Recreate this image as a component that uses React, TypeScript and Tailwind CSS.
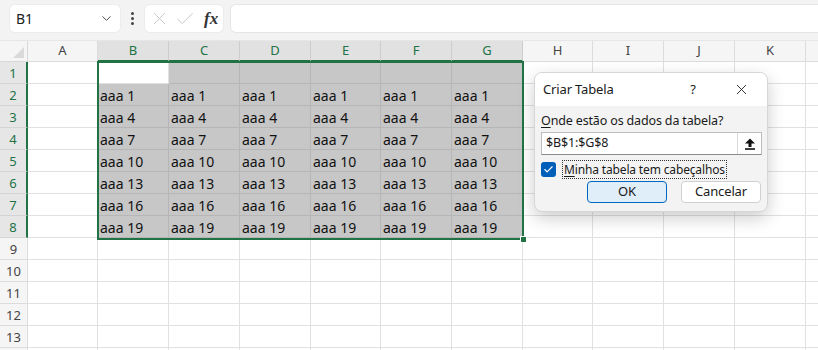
import { Check, ChevronDown, X } from 'lucide-react'

const columns = [
  { name: 'A', width: 70 },
  { name: 'B', width: 71 },
  { name: 'C', width: 71 },
  { name: 'D', width: 71 },
  { name: 'E', width: 70 },
  { name: 'F', width: 71 },
  { name: 'G', width: 71 },
  { name: 'H', width: 70 },
  { name: 'I', width: 71 },
  { name: 'J', width: 71 },
  { name: 'K', width: 71 },
  { name: '', width: 71 },
]

const rows = Array.from({ length: 14 }, (_, i) => i + 1)
const selectedCols = ['B', 'C', 'D', 'E', 'F', 'G']

function cellValue(row: number) {
  if (row < 2 || row > 8) return ''
  return `aaa ${(row - 2) * 3 + 1}`
}

function UploadArrow() {
  return (
    <svg width="14" height="14" viewBox="0 0 14 14" fill="#111">
      <polygon points="7,1.5 2,6.5 5.5,6.5 5.5,10 8.5,10 8.5,6.5 12,6.5" />
      <rect x="2" y="11.2" width="10" height="1.6" />
    </svg>
  )
}

function Toolbar() {
  return (
    <div className="h-[41px] bg-[#f3f3f3] flex items-start pt-[5px] border-b border-[#e6e6e6]">
      <div className="ml-[10px] w-[110px] h-[27px] bg-white rounded-[5px] shadow-[0_0_0_1px_#ececec] flex items-center justify-between pl-[6px] pr-[6px]">
        <span className="text-[14px] text-[#222]">B1</span>
        <ChevronDown size={15} strokeWidth={1.5} className="text-[#444]" />
      </div>
      <div className="w-[25px] h-[27px] flex flex-col items-center justify-center gap-[2px]">
        <span className="w-[3px] h-[3px] rounded-full bg-[#444]" />
        <span className="w-[3px] h-[3px] rounded-full bg-[#444]" />
        <span className="w-[3px] h-[3px] rounded-full bg-[#444]" />
      </div>
      <div className="w-[78px] h-[27px] bg-white rounded-[5px] shadow-[0_0_0_1px_#ececec] flex items-center pl-[4px]">
        <X size={21} strokeWidth={1} className="text-[#c4c4c4]" />
        <Check size={22} strokeWidth={1} className="text-[#c4c4c4] ml-[4px]" />
        <span className="ml-[8px] font-['Liberation_Serif',serif] italic font-bold text-[17px] leading-none text-[#333]">
          fx
        </span>
      </div>
      <div className="ml-[8px] flex-1 h-[27px] bg-white rounded-l-[5px] shadow-[0_0_0_1px_#e6e6e6]" />
    </div>
  )
}

function HeaderRow() {
  return (
    <div className="flex h-[21px]">
      <div className="w-[28px] shrink-0 bg-[#f5f5f5] border-r border-b border-[#d8d8d8] relative">
        <div className="absolute right-[3px] bottom-[3px] w-0 h-0 border-l-[11px] border-l-transparent border-b-[11px] border-b-[#dadada]" />
      </div>
      {columns.map((c, i) => {
        const sel = selectedCols.includes(c.name)
        return (
          <div
            key={i}
            style={{ width: c.width }}
            className={
              sel
                ? 'shrink-0 flex items-center justify-center text-[13px] text-[#217346] bg-[#e1e1e1] border-r border-[#cdcdcd] border-b-2 border-b-[#217346]'
                : 'shrink-0 flex items-center justify-center text-[13px] text-[#444] bg-[#f5f5f5] border-r border-b border-[#dcdcdc]'
            }
          >
            {c.name}
          </div>
        )
      })}
    </div>
  )
}

function GridRow({ row }: { row: number }) {
  const rowSel = row <= 8
  return (
    <div className="flex h-[22px]">
      <div
        className={
          rowSel
            ? 'w-[28px] shrink-0 flex items-center justify-center pt-[2px] text-[13px] text-[#217346] bg-[#e6e6e6] border-b border-[#d4d4d4] border-r-2 border-r-[#217346]'
            : 'w-[28px] shrink-0 flex items-center justify-center pt-[2px] text-[13px] text-[#444] bg-[#f5f5f5] border-b border-r border-[#dcdcdc]'
        }
      >
        {row <= 13 ? row : ''}
      </div>
      {columns.map((c, i) => {
        const inSel = rowSel && selectedCols.includes(c.name)
        const active = inSel && c.name === 'B' && row === 1
        const shaded = inSel && !active
        return (
          <div
            key={i}
            style={{ width: c.width }}
            className={
              shaded
                ? 'shrink-0 bg-[#c7c7c7] border-r border-b border-[#b6b6b6] flex items-end pl-[2px] pb-[0px] text-[14px] leading-[18px] text-[#111] whitespace-nowrap'
                : 'shrink-0 bg-white border-r border-b border-[#e1e1e1] flex items-end pl-[2px] pb-[0px] text-[14px] leading-[18px] text-[#111] whitespace-nowrap'
            }
          >
            {selectedCols.includes(c.name) ? cellValue(row) : ''}
          </div>
        )
      })}
    </div>
  )
}

function CreateTableDialog() {
  return (
    <div className="absolute left-[534px] top-[72px] w-[234px] h-[140px] rounded-[8px] border border-[#d6d6d6] bg-[#f3f3f3] shadow-[0_6px_18px_rgba(0,0,0,0.2)] overflow-hidden text-[12.5px] tracking-[-0.15px] text-[#1a1a1a]">
      <div className="h-[33px] bg-white flex items-center pl-[8px]">
        <span className="flex-1 text-[13px]">Criar Tabela</span>
        <span className="w-[20px] text-center mr-[30px] text-[13px]">?</span>
        <X size={17} strokeWidth={1.3} className="mr-[17px] text-[#222]" />
      </div>
      <div className="pl-[6px] pr-[5px]">
        <div className="mt-[6px] h-[18px] leading-[18px]">
          <span className="underline underline-offset-2">O</span>nde estão os dados da tabela?
        </div>
        <div className="mt-[2px] h-[23px] w-[221px] bg-white border border-[#bdbdbd] border-b-[#8a8a8a] flex items-center">
          <span className="flex-1 pl-[4px]">$B$1:$G$8</span>
          <div className="w-[24px] h-[21px] border-l border-[#d8d8d8] flex items-center justify-center bg-white">
            <UploadArrow />
          </div>
        </div>
        <div className="mt-[5px] flex items-center h-[19px]">
          <div className="w-[15px] h-[15px] rounded-[3px] bg-[#005fb8] flex items-center justify-center">
            <Check size={11} strokeWidth={2.5} className="text-white" />
          </div>
          <div className="ml-[6px] border border-dotted border-[#333] px-[1px] h-[19px] leading-[17px] whitespace-nowrap text-[12px]">
            <span className="underline underline-offset-2">M</span>inha tabela tem cabeçalhos
          </div>
        </div>
        <div className="mt-[2px] flex justify-end gap-[14px] pr-[1px]">
          <div className="w-[80px] h-[22px] rounded-[4px] border border-[#0067c0] bg-[#e0eef9] flex items-center justify-center text-[13px]">
            OK
          </div>
          <div className="w-[80px] h-[22px] rounded-[4px] border border-[#d0d0d0] bg-white flex items-center justify-center text-[13px]">
            Cancelar
          </div>
        </div>
      </div>
    </div>
  )
}

export default function App() {
  return (
    <div className="w-[818px] h-[350px] overflow-hidden bg-white relative font-['Noto_Sans',sans-serif]">
      <Toolbar />
      <HeaderRow />
      {rows.map((r) => (
        <GridRow key={r} row={r} />
      ))}
      {/* selection outline + fill handle */}
      <div className="absolute left-[97px] top-[61px] w-[427px] h-[179px] border-2 border-[#217346] pointer-events-none" />
      <div className="absolute left-[520px] top-[236px] w-[7px] h-[7px] bg-[#217346] border border-white" />
      <CreateTableDialog />
    </div>
  )
}
